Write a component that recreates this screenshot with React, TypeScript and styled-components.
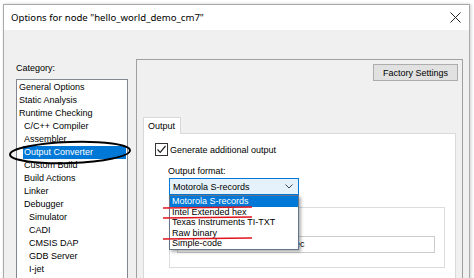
import React from "react";
import styled, { createGlobalStyle } from "styled-components";

const GlobalStyle = createGlobalStyle`
  html, body {
    margin: 0;
    padding: 0;
    background: #ffffff;
    overflow: hidden;
  }
  body {
    font-family: "Liberation Sans", Arial, sans-serif;
    font-size: 9px;
    color: #000;
  }
`;

const Window = styled.div`
  margin: 4px 0 0 3px;
  width: 467px;
  height: 290px;
  box-sizing: border-box;
  border: 1px solid #a9a9a9;
  border-bottom: none;
  display: flex;
  flex-direction: column;
  box-shadow: 1px 0 3px rgba(0, 0, 0, 0.2);
`;

const TitleBar = styled.div`
  height: 25px;
  flex: none;
  background: #ffffff;
  display: flex;
  align-items: center;
  justify-content: space-between;
  padding: 0 8px 0 7px;
`;

const Title = styled.span`
  font-family: "Noto Sans", "Liberation Sans", sans-serif;
  font-size: 9.6px;
  color: #000;
`;

const CloseButton = styled.div`
  width: 12px;
  height: 12px;
  display: flex;
  align-items: center;
  justify-content: center;
`;

const Body = styled.div`
  flex: 1;
  background: #f0f0f0;
  display: flex;
  align-items: flex-start;
  gap: 8px;
  padding: 29px 0 0 12px;
`;

const LeftColumn = styled.div`
  width: 112px;
  padding-top: 3px;
  display: flex;
  flex-direction: column;
`;

const Label = styled.div<{ $indent?: number }>`
  line-height: 12px;
  height: 12px;
  margin-left: ${(p) => p.$indent ?? 0}px;
  white-space: nowrap;
`;

const CategoryList = styled.div`
  margin-top: 5px;
  height: 220px;
  background: #ffffff;
  border: 1px solid #828790;
  box-sizing: border-box;
  padding-top: 1px;
`;

const CategoryItem = styled.div<{ $level: number; $selected?: boolean }>`
  position: relative;
  height: 13px;
  line-height: 13px;
  margin-left: ${(p) => 1 + (p.$level - 1) * 5}px;
  margin-right: 1px;
  padding-left: 1px;
  white-space: nowrap;
  background: ${(p) => (p.$selected ? "#0078d7" : "transparent")};
  color: ${(p) => (p.$selected ? "#ffffff" : "#000000")};
`;

const Ellipse = styled.svg`
  position: absolute;
  left: -15px;
  top: -5px;
  overflow: visible;
  pointer-events: none;
`;

const Frame = styled.div`
  width: 327px;
  height: 230px;
  box-sizing: border-box;
  border: 1px solid #a0a0a0;
  display: flex;
  flex-direction: column;
`;

const FactoryButton = styled.div`
  align-self: flex-end;
  margin: 4px 4px 0 0;
  width: 85px;
  height: 17px;
  box-sizing: border-box;
  background: #e1e1e1;
  border: 1px solid #adadad;
  display: flex;
  align-items: center;
  justify-content: center;
`;

const TabStrip = styled.div`
  margin: 36px 0 0 6px;
  display: flex;
`;

const Tab = styled.div`
  width: 38px;
  height: 17px;
  box-sizing: border-box;
  background: #ffffff;
  border: 1px solid #d9d9d9;
  border-bottom: none;
  padding-left: 4px;
  line-height: 16px;
  margin-bottom: -1px;
  position: relative;
  z-index: 1;
`;

const TabPage = styled.div`
  margin: 0 6px 0 6px;
  flex: 1;
  background: #ffffff;
  border: 1px solid #d9d9d9;
  border-bottom: none;
  padding: 9px 0 0 11px;
  display: flex;
  flex-direction: column;
`;

const CheckRow = styled.div`
  display: flex;
  align-items: center;
  gap: 2px;
  height: 13px;
`;

const CheckBox = styled.div`
  width: 13px;
  height: 13px;
  box-sizing: border-box;
  border: 1px solid #333333;
  background: #ffffff;
  display: flex;
  align-items: center;
  justify-content: center;
`;

const FieldLabel = styled.div`
  margin: 9px 0 0 13px;
  line-height: 12px;
`;

const SelectWrap = styled.div`
  position: relative;
  margin: 1px 0 0 14px;
  width: 130px;
  z-index: 2;
`;

const Select = styled.div`
  height: 17px;
  box-sizing: border-box;
  background: #e5f1fb;
  border: 1px solid #0078d7;
  display: flex;
  align-items: center;
  justify-content: space-between;
  padding: 0 5px 0 3px;
`;

const DropList = styled.div`
  position: absolute;
  top: 100%;
  left: 0;
  width: 130px;
  box-sizing: border-box;
  background: #ffffff;
  border: 1px solid #64748b;
  box-shadow: 2px 2px 3px rgba(0, 0, 0, 0.3);
`;

const DropItem = styled.div<{ $selected?: boolean }>`
  height: 10.5px;
  line-height: 10.5px;
  padding-left: 2px;
  white-space: nowrap;
  background: ${(p) => (p.$selected ? "#0078d7" : "transparent")};
  color: ${(p) => (p.$selected ? "#ffffff" : "#000000")};
`;

const Scribbles = styled.svg`
  position: absolute;
  left: -7px;
  top: 0;
  overflow: visible;
  pointer-events: none;
`;

const GroupBox = styled.div`
  margin: 12px 0 0 14px;
  width: 276px;
  height: 61px;
  box-sizing: border-box;
  border: 1px solid #dcdcdc;
  padding: 28px 9px 0 7px;
`;

const TextInput = styled.div`
  height: 17px;
  box-sizing: border-box;
  border: 1px solid #cccccc;
  background: #ffffff;
  line-height: 15px;
  padding-left: 12px;
  white-space: nowrap;
  overflow: hidden;
`;

type Category = { label: string; level: number; selected?: boolean };

const categories: Category[] = [
  { label: "General Options", level: 1 },
  { label: "Static Analysis", level: 1 },
  { label: "Runtime Checking", level: 1 },
  { label: "C/C++ Compiler", level: 2 },
  { label: "Assembler", level: 2 },
  { label: "Output Converter", level: 2, selected: true },
  { label: "Custom Build", level: 2 },
  { label: "Build Actions", level: 2 },
  { label: "Linker", level: 2 },
  { label: "Debugger", level: 2 },
  { label: "Simulator", level: 3 },
  { label: "CADI", level: 3 },
  { label: "CMSIS DAP", level: 3 },
  { label: "GDB Server", level: 3 },
  { label: "I-jet", level: 3 },
];

const formats = [
  "Motorola S-records",
  "Intel Extended hex",
  "Texas Instruments TI-TXT",
  "Raw binary",
  "Simple-code",
];

export default function App() {
  return (
    <>
      <GlobalStyle />
      <Window>
        <TitleBar>
          <Title>Options for node "hello_world_demo_cm7"</Title>
          <CloseButton>
            <svg width="11" height="11" viewBox="0 0 11 11">
              <path d="M0.5 0.5 L10.5 10.5 M10.5 0.5 L0.5 10.5" stroke="#222" strokeWidth="1" />
            </svg>
          </CloseButton>
        </TitleBar>
        <Body>
          <LeftColumn>
            <Label>Category:</Label>
            <CategoryList>
              {categories.map((c) => (
                <CategoryItem key={c.label} $level={c.level} $selected={c.selected}>
                  {c.label}
                  {c.selected && (
                    <Ellipse width="124" height="24">
                      <ellipse
                        cx="62"
                        cy="11.5"
                        rx="60"
                        ry="10.5"
                        fill="none"
                        stroke="#000"
                        strokeWidth="2"
                        transform="rotate(-2 62 11.5)"
                      />
                    </Ellipse>
                  )}
                </CategoryItem>
              ))}
            </CategoryList>
          </LeftColumn>
          <Frame>
            <FactoryButton>Factory Settings</FactoryButton>
            <TabStrip>
              <Tab>Output</Tab>
            </TabStrip>
            <TabPage>
              <CheckRow>
                <CheckBox>
                  <svg width="11" height="11" viewBox="0 0 11 11">
                    <path d="M1.5 5.5 L4.2 8.3 L9.5 2" fill="none" stroke="#222" strokeWidth="1.2" />
                  </svg>
                </CheckBox>
                <span>Generate additional output</span>
              </CheckRow>
              <FieldLabel>Output format:</FieldLabel>
              <SelectWrap>
                <Select>
                  <span>Motorola S-records</span>
                  <svg width="8" height="5" viewBox="0 0 8 5">
                    <path d="M0.5 0.5 L4 4 L7.5 0.5" fill="none" stroke="#444" strokeWidth="1" />
                  </svg>
                </Select>
                <DropList>
                  {formats.map((f, i) => (
                    <DropItem key={f} $selected={i === 0}>
                      {f}
                    </DropItem>
                  ))}
                  <Scribbles width="96" height="48">
                    <path d="M0 12 L89 11" stroke="#e0141e" strokeWidth="1.6" fill="none" />
                    <path d="M0 22 L89 21" stroke="#e0141e" strokeWidth="1.6" fill="none" />
                    <path d="M0 43 L89 42" stroke="#e0141e" strokeWidth="1.6" fill="none" />
                  </Scribbles>
                </DropList>
              </SelectWrap>
              <GroupBox>
                <TextInput>hello_world_demo_cm7.srec</TextInput>
              </GroupBox>
            </TabPage>
          </Frame>
        </Body>
      </Window>
    </>
  );
}
